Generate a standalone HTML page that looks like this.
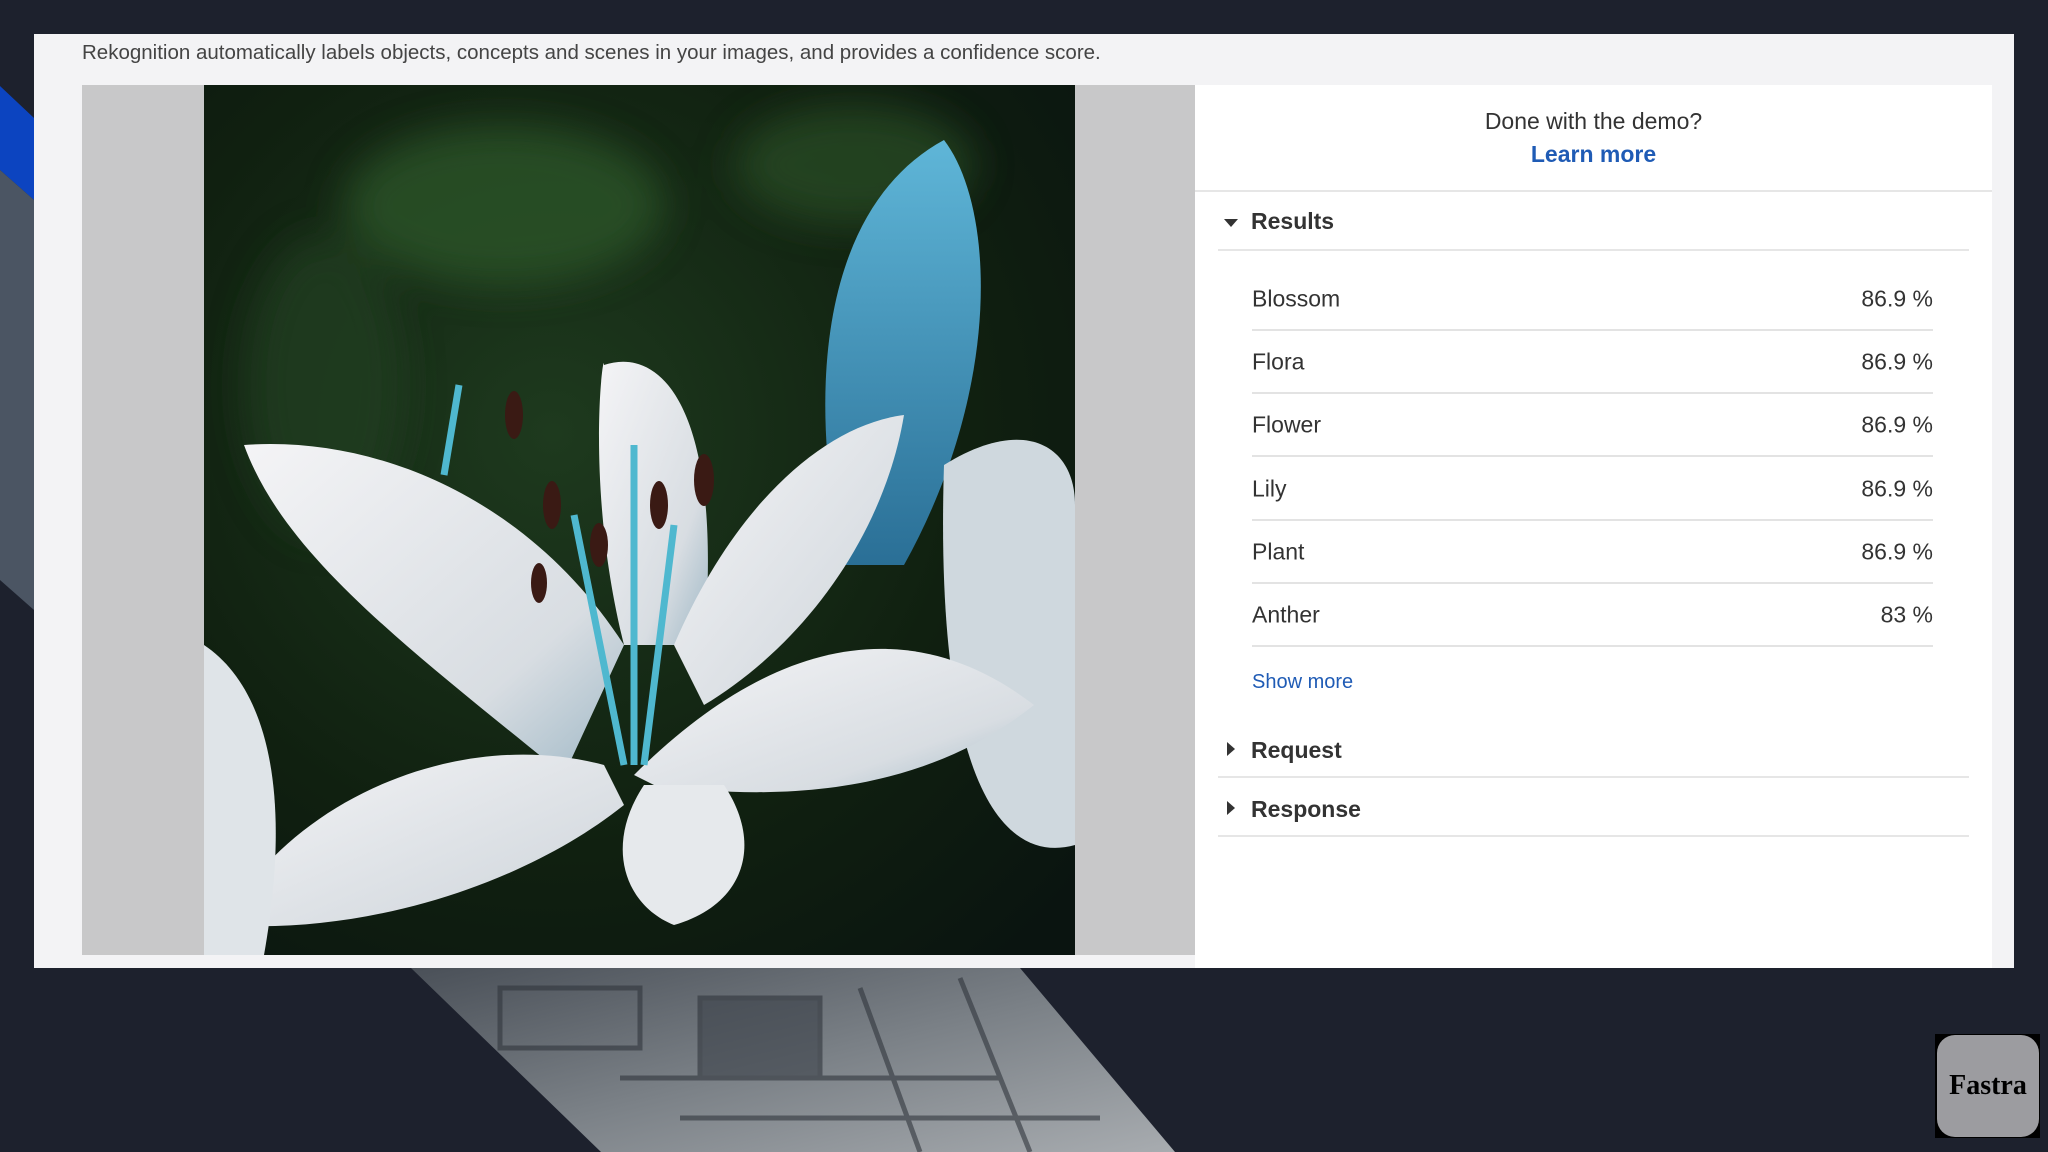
<!DOCTYPE html>
<html><head><meta charset="utf-8"><style>
*{margin:0;padding:0;box-sizing:border-box}
body{width:2048px;height:1152px;background:#1d212d;position:relative;overflow:hidden;font-family:"Liberation Sans",sans-serif;color:#333}
.abs{position:absolute}
.row{position:absolute;left:1252px;width:681px;height:63px;border-bottom:2px solid #e3e3e3;font-size:23px;color:#333}
.row span{position:absolute;top:50%;transform:translateY(-50%)}
.row .p{right:0}
.hd{position:absolute;left:1218px;width:751px;font-size:23px;font-weight:bold;color:#333}
.tri{display:inline-block;width:0;height:0;position:absolute}
</style></head><body>
<svg class="abs" style="left:0;top:0" width="40" height="620">
<polygon points="0,86 34,118 34,200 0,170" fill="#0c44c0"/>
<polygon points="0,170 34,200 34,610 0,580" fill="#4b5563"/>
</svg>
<svg class="abs" style="left:0;top:968px" width="1300" height="184">
<defs><linearGradient id="cg" x1="0" y1="0" x2="1" y2="1"><stop offset="0" stop-color="#4a5058"/><stop offset=".5" stop-color="#7a8086"/><stop offset="1" stop-color="#a8acb0"/></linearGradient></defs>
<polygon points="411,0 1020,0 1175,184 601,184" fill="url(#cg)"/>
<g stroke="#30353c" stroke-width="5" opacity=".6">
<rect x="500" y="20" width="140" height="60" fill="none"/><rect x="700" y="30" width="120" height="80" fill="#3a4048"/>
<line x1="620" y1="110" x2="1000" y2="110"/><line x1="680" y1="150" x2="1100" y2="150"/>
<line x1="860" y1="20" x2="920" y2="184"/><line x1="960" y1="10" x2="1030" y2="184"/>
</g>
</svg>
<div class="abs" style="left:34px;top:34px;width:1980px;height:934px;background:#f3f3f5"></div>
<div class="abs" style="left:82px;top:41px;font-size:20.5px;color:#444">Rekognition automatically labels objects, concepts and scenes in your images, and provides a confidence score.</div>
<div class="abs" style="left:82px;top:85px;width:1113px;height:870px;background:#c8c8c9"></div>
<svg class="abs" style="left:204px;top:85px" width="871" height="870">
<defs>
<radialGradient id="bg" cx=".4" cy=".4" r=".8"><stop offset="0" stop-color="#1e3a1e"/><stop offset=".6" stop-color="#102010"/><stop offset="1" stop-color="#0a1410"/></radialGradient>
<linearGradient id="pt" x1="0" y1="0" x2="1" y2="1"><stop offset="0" stop-color="#f4f4f6"/><stop offset=".7" stop-color="#d8dde2"/><stop offset="1" stop-color="#9fb8c6"/></linearGradient>
<linearGradient id="bd" x1="0" y1="0" x2="0" y2="1"><stop offset="0" stop-color="#5fb6d8"/><stop offset="1" stop-color="#2a6f96"/></linearGradient>
<filter id="bl"><feGaussianBlur stdDeviation="20"/></filter>
</defs>
<rect width="871" height="870" fill="url(#bg)"/>
<g filter="url(#bl)" opacity=".7"><ellipse cx="300" cy="120" rx="160" ry="80" fill="#2f5a2a"/><ellipse cx="650" cy="80" rx="120" ry="60" fill="#2c4f28"/><ellipse cx="120" cy="300" rx="80" ry="150" fill="#243f22"/></g>
<path d="M640,480 C600,300 620,120 740,55 C790,120 800,300 700,480Z" fill="url(#bd)"/>
<path d="M740,380 C820,330 871,360 871,420 L871,760 C800,780 730,700 740,380Z" fill="#cfd8de"/>
<path d="M360,690 C200,560 80,470 40,360 C180,350 330,420 420,560Z" fill="url(#pt)"/>
<path d="M420,560 C380,400 400,260 400,280 C460,260 520,330 500,560Z" fill="url(#pt)"/>
<path d="M470,560 C530,420 620,340 700,330 C680,450 600,560 500,620Z" fill="url(#pt)"/>
<path d="M430,690 C560,560 700,520 830,620 C730,700 600,720 450,700Z" fill="url(#pt)"/>
<path d="M400,680 C250,640 80,720 20,840 C160,850 320,800 420,720Z" fill="url(#pt)"/>
<path d="M440,700 C400,760 420,820 470,840 C540,820 560,760 520,700Z" fill="#e6e9ec"/>
<path d="M0,560 C60,600 90,700 60,870 L0,870Z" fill="#dfe4e8"/>
<g fill="#3a1a14"><ellipse cx="310" cy="330" rx="9" ry="24"/><ellipse cx="348" cy="420" rx="9" ry="24"/><ellipse cx="455" cy="420" rx="9" ry="24"/><ellipse cx="500" cy="395" rx="10" ry="26"/><ellipse cx="395" cy="460" rx="9" ry="22"/><ellipse cx="335" cy="498" rx="8" ry="20"/></g>
<g stroke="#4fb8cf" stroke-width="7" fill="none"><path d="M420,680 L370,430"/><path d="M430,680 L430,360"/><path d="M440,680 L470,440"/><path d="M240,390 L255,300"/></g>
</svg>
<div class="abs" style="left:1195px;top:85px;width:797px;height:883px;background:#fff"></div>
<div class="abs" style="left:1195px;top:108px;width:797px;text-align:center;font-size:23px;color:#333">Done with the demo?</div>
<div class="abs" style="left:1195px;top:141px;width:797px;text-align:center;font-size:23px;font-weight:bold;color:#1f5bb5">Learn more</div>
<div class="abs" style="left:1195px;top:190px;width:797px;height:2px;background:#e6e6e6"></div>
<div class="hd" style="top:208px;height:43px;border-bottom:2px solid #e6e6e6"><span class="tri" style="left:6px;top:11px;border-left:7px solid transparent;border-right:7px solid transparent;border-top:8px solid #333"></span><span style="position:absolute;left:33px;top:0">Results</span></div>
<div class="row" style="top:268px"><span>Blossom</span><span class="p">86.9 %</span></div>
<div class="row" style="top:331px"><span>Flora</span><span class="p">86.9 %</span></div>
<div class="row" style="top:394px"><span>Flower</span><span class="p">86.9 %</span></div>
<div class="row" style="top:458px"><span>Lily</span><span class="p">86.9 %</span></div>
<div class="row" style="top:521px"><span>Plant</span><span class="p">86.9 %</span></div>
<div class="row" style="top:584px"><span>Anther</span><span class="p">83 %</span></div>
<div class="abs" style="left:1252px;top:671px;font-size:20px;color:#1f5bb5">Show more</div>
<div class="hd" style="top:737px;height:41px;border-bottom:2px solid #e6e6e6"><span class="tri" style="left:9px;top:5px;border-top:7px solid transparent;border-bottom:7px solid transparent;border-left:8px solid #333"></span><span style="position:absolute;left:33px;top:0">Request</span></div>
<div class="hd" style="top:796px;height:41px;border-bottom:2px solid #e6e6e6"><span class="tri" style="left:9px;top:5px;border-top:7px solid transparent;border-bottom:7px solid transparent;border-left:8px solid #333"></span><span style="position:absolute;left:33px;top:0">Response</span></div>
<div class="abs" style="left:1935px;top:1034px;width:105px;height:104px;background:#000"></div>
<div class="abs" style="left:1937px;top:1035px;width:102px;height:102px;background:#9c9ca0;border-radius:18px;text-align:center;line-height:102px;font-family:'Liberation Serif',serif;font-weight:bold;font-size:28px;color:#000">Fastra</div>
</body></html>
